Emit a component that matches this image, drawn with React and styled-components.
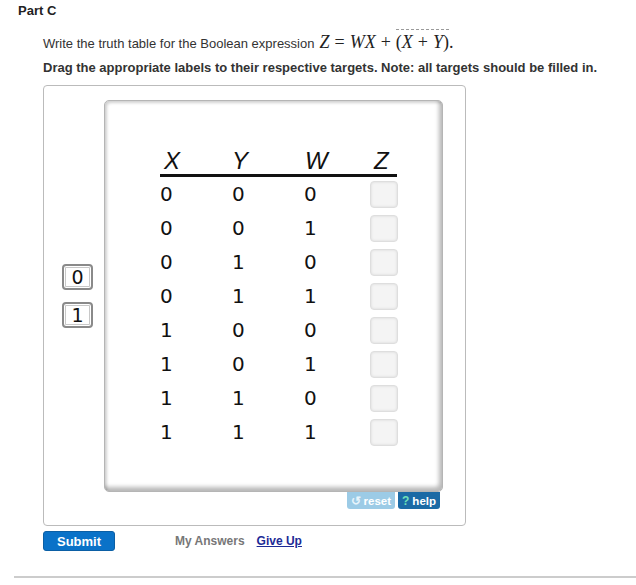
import React from "react";
import styled, { createGlobalStyle } from "styled-components";

const GlobalStyle = createGlobalStyle`
  html, body {
    margin: 0;
    padding: 0;
    background: #fff;
    font-family: "Liberation Sans", Arial, sans-serif;
    color: #222;
  }
`;

const Page = styled.div`
  width: 636px;
  height: 585px;
  overflow: hidden;
  position: relative;
`;

const PartTitle = styled.h2`
  margin: 0;
  padding: 3px 0 0 18px;
  font-size: 13px;
  font-weight: bold;
  line-height: 15px;
  color: #222;
`;

const Body = styled.div`
  padding: 0 0 0 43px;
`;

const Prompt = styled.p`
  margin: 11px 0 0;
  font-size: 13px;
  color: #333;
  line-height: 22px;
  display: flex;
  align-items: baseline;
  gap: 5px;
`;

const Math = styled.span`
  font-family: "Liberation Serif", "Times New Roman", serif;
  font-size: 18px;
  color: #222;
  white-space: pre;
  display: inline-flex;
  align-items: baseline;
`;

const Var = styled.i`
  font-style: italic;
`;

const Op = styled.span`
  margin: 0 5px;
`;

const Over = styled.span`
  border-top: 1px dashed #9a9a9a;
  padding-top: 1px;
  display: inline-flex;
  align-items: baseline;
`;

const Instruction = styled.p`
  margin: 5px 0 0;
  font-size: 13px;
  font-weight: bold;
  color: #333;
  line-height: 16px;
`;

const Board = styled.div`
  margin-top: 9px;
  width: 421px;
  height: 439px;
  border: 1px solid #bbb;
  border-radius: 4px;
  display: flex;
  align-items: flex-start;
`;

const Palette = styled.div`
  width: 60px;
  height: 392px;
  margin-top: 14px;
  display: flex;
  flex-direction: column;
  align-items: flex-start;
  justify-content: center;
  gap: 12px;
  padding-left: 18px;
  box-sizing: border-box;
`;

const Tile = styled.div`
  width: 31px;
  height: 26px;
  box-sizing: border-box;
  border: 2px solid #8a8a8a;
  border-radius: 4px;
  box-shadow: inset 0 0 0 1px #fff, inset 0 0 0 2px #c8c8c8;
  background: #fff;
  display: flex;
  align-items: center;
  justify-content: center;
  font-family: "DejaVu Sans", Verdana, sans-serif;
  font-size: 19px;
  color: #111;
  line-height: 1;
`;

const Stage = styled.div`
  display: flex;
  flex-direction: column;
  align-items: flex-end;
  margin-top: 14px;
`;

const Canvas = styled.div`
  width: 339px;
  height: 392px;
  box-sizing: border-box;
  border: 1px solid #b5b5b5;
  border-radius: 5px;
  box-shadow: inset -3px -4px 4px rgba(0, 0, 0, 0.28),
    inset 2px 2px 3px rgba(0, 0, 0, 0.18);
  padding: 46px 0 0 55px;
  background: #fff;
`;

const HeaderRow = styled.div`
  display: grid;
  grid-template-columns: 72px 72px 68px 28px;
  height: 26px;
  align-items: end;
  width: 240px;
`;

const HeadCell = styled.span`
  font-family: "Liberation Sans", Arial, sans-serif;
  font-style: italic;
  font-size: 24px;
  line-height: 1;
  color: #111;
  padding-left: ${(p) => p.$shift || 0}px;
`;

const Rule = styled.div`
  width: 237px;
  height: 3px;
  background: #111;
  margin-top: 1px;
`;

const Row = styled.div`
  display: grid;
  grid-template-columns: 72px 72px 66px 30px;
  height: 34px;
  align-items: center;
`;

const Digit = styled.span`
  font-family: "DejaVu Sans", Verdana, sans-serif;
  font-size: 20px;
  line-height: 1;
  color: #111;
`;

const Target = styled.div`
  width: 28px;
  height: 27px;
  box-sizing: border-box;
  border: 1px solid #dedede;
  border-radius: 4px;
  background: #f4f4f4;
  box-shadow: inset 0 0 3px rgba(0, 0, 0, 0.12);
`;

const Tools = styled.div`
  display: flex;
  gap: 3px;
  margin-right: 3px;
`;

const ToolButton = styled.button`
  height: 17px;
  border: none;
  border-radius: 0 0 3px 3px;
  padding: 0 4px;
  font-family: "Liberation Sans", Arial, sans-serif;
  font-size: 11.5px;
  font-weight: bold;
  color: #fff;
  background: ${(p) => (p.$dark ? "#1b6aa5" : "#9ccbe6")};
  display: flex;
  align-items: center;
  gap: 3px;
  cursor: pointer;
`;

const ToolIcon = styled.span`
  color: ${(p) => p.$color};
  font-size: 12px;
`;

const Footer = styled.div`
  display: flex;
  align-items: center;
  margin-top: 5px;
  height: 20px;
`;

const Submit = styled.button`
  width: 72px;
  height: 20px;
  border: 1px solid #0b5fa5;
  border-radius: 3px;
  background: #0a72c8;
  color: #fff;
  font-family: "Liberation Sans", Arial, sans-serif;
  font-size: 13px;
  font-weight: bold;
  padding: 0;
  cursor: pointer;
`;

const Link = styled.span`
  font-size: 12px;
  font-weight: bold;
  color: ${(p) => (p.$plain ? "#777" : "#1d2a96")};
  text-decoration: ${(p) => (p.$plain ? "none" : "underline")};
  margin-left: ${(p) => p.$gap}px;
`;

const Divider = styled.div`
  position: absolute;
  left: 14px;
  right: 0;
  top: 576px;
  height: 2px;
  background: #ccc;
`;

const rows = [
  [0, 0, 0],
  [0, 0, 1],
  [0, 1, 0],
  [0, 1, 1],
  [1, 0, 0],
  [1, 0, 1],
  [1, 1, 0],
  [1, 1, 1],
];

export default function App() {
  return (
    <Page>
      <GlobalStyle />
      <PartTitle>Part C</PartTitle>
      <Body>
        <Prompt>
          Write the truth table for the Boolean expression
          <Math>
            <Var>Z</Var>
            <Op>=</Op>
            <Var>WX</Var>
            <Op>+</Op>
            <Over>
              (<Var>X</Var>
              <Op>+</Op>
              <Var>Y</Var>)
            </Over>
            .
          </Math>
        </Prompt>
        <Instruction>
          Drag the appropriate labels to their respective targets. Note: all targets should be filled in.
        </Instruction>
        <Board>
          <Palette>
            <Tile>0</Tile>
            <Tile>1</Tile>
          </Palette>
          <Stage>
            <Canvas>
              <HeaderRow>
                <HeadCell $shift={4}>X</HeadCell>
                <HeadCell $shift={0}>Y</HeadCell>
                <HeadCell $shift={1}>W</HeadCell>
                <HeadCell $shift={2}>Z</HeadCell>
              </HeaderRow>
              <Rule />
              {rows.map((r, i) => (
                <Row key={i}>
                  {r.map((d, j) => (
                    <Digit key={j}>{d}</Digit>
                  ))}
                  <Target />
                </Row>
              ))}
            </Canvas>
            <Tools>
              <ToolButton>
                <ToolIcon $color="#e8f4fb">↺</ToolIcon>reset
              </ToolButton>
              <ToolButton $dark>
                <ToolIcon $color="#6fe0b8">?</ToolIcon>help
              </ToolButton>
            </Tools>
          </Stage>
        </Board>
        <Footer>
          <Submit>Submit</Submit>
          <Link $plain $gap={60}>My Answers</Link>
          <Link $gap={12}>Give Up</Link>
        </Footer>
      </Body>
      <Divider />
    </Page>
  );
}
